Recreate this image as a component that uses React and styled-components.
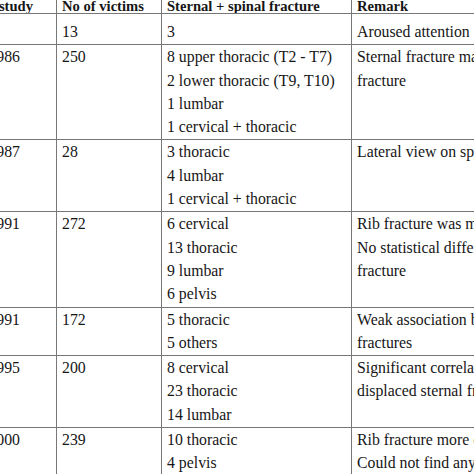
import React from "react";
import styled, { createGlobalStyle } from "styled-components";

const Global = createGlobalStyle`
  html, body { margin: 0; padding: 0; background: #fff; }
  body { width: 474px; height: 474px; overflow: hidden; }
`;

const Page = styled.div`
  width: 474px;
  height: 474px;
  overflow: hidden;
  background: #fff;
`;

const Table = styled.table`
  border-collapse: collapse;
  table-layout: fixed;
  width: 650px;
  margin: -1px 0 0 -100px;
  font-family: "Liberation Serif", "Times New Roman", serif;
  color: #161616;
`;

const HeadCell = styled.th`
  font-weight: 700;
  font-size: 14.6px;
  line-height: 14px;
  height: 14px;
  padding: 0 ${(p) => (p.$right ? "23px" : "0")} 0 5px;
  text-align: ${(p) => (p.$right ? "right" : "left")};
  white-space: nowrap;
  vertical-align: bottom;
  border: 1px solid #777;
  border-top: none;
  overflow: hidden;
`;

const Cell = styled.td`
  font-size: 15.8px;
  line-height: 23.3px;
  padding: ${(p) => (p.$first ? "6px" : "0")} ${(p) => (p.$right ? "36px" : "0")} 1px 5px;
  text-align: ${(p) => (p.$right ? "right" : "left")};
  vertical-align: top;
  border: 1px solid #777;
  white-space: nowrap;
  overflow: hidden;
`;

const Line = styled.div`
  white-space: nowrap;
`;

const rows = [
  { year: "", n: "13", fx: ["3"], remark: ["Aroused attention"] },
  {
    year: "1986",
    n: "250",
    fx: ["8 upper thoracic (T2 - T7)", "2 lower thoracic (T9, T10)", "1 lumbar", "1 cervical + thoracic"],
    remark: ["Sternal fracture may indicate spinal", "fracture"],
  },
  {
    year: "1987",
    n: "28",
    fx: ["3 thoracic", "4 lumbar", "1 cervical + thoracic"],
    remark: ["Lateral view on spine radiograph"],
  },
  {
    year: "1991",
    n: "272",
    fx: ["6 cervical", "13 thoracic", "9 lumbar", "6 pelvis"],
    remark: ["Rib fracture was more common", "No statistical difference with spinal", "fracture"],
  },
  {
    year: "1991",
    n: "172",
    fx: ["5 thoracic", "5 others"],
    remark: ["Weak association between", "fractures"],
  },
  {
    year: "1995",
    n: "200",
    fx: ["8 cervical", "23 thoracic", "14 lumbar"],
    remark: ["Significant correlation between", "displaced sternal fracture"],
  },
  {
    year: "2000",
    n: "239",
    fx: ["10 thoracic", "4 pelvis", "2 lumbar"],
    remark: ["Rib fracture more common", "Could not find any association"],
  },
];

export default function App() {
  return (
    <Page>
      <Global />
      <Table>
        <colgroup>
          <col style={{ width: 156 }} />
          <col style={{ width: 105 }} />
          <col style={{ width: 190 }} />
          <col style={{ width: 199 }} />
        </colgroup>
        <thead>
          <tr>
            <HeadCell $right>Year of study</HeadCell>
            <HeadCell>No of victims</HeadCell>
            <HeadCell>Sternal + spinal fracture</HeadCell>
            <HeadCell>Remark</HeadCell>
          </tr>
        </thead>
        <tbody>
          {rows.map((r, i) => (
            <tr key={i}>
              <Cell $right $first={i === 0}>{r.year}</Cell>
              <Cell $first={i === 0}>{r.n}</Cell>
              <Cell $first={i === 0}>
                {r.fx.map((t, j) => (
                  <Line key={j}>{t}</Line>
                ))}
              </Cell>
              <Cell $first={i === 0}>
                {r.remark.map((t, j) => (
                  <Line key={j}>{t}</Line>
                ))}
              </Cell>
            </tr>
          ))}
        </tbody>
      </Table>
    </Page>
  );
}
